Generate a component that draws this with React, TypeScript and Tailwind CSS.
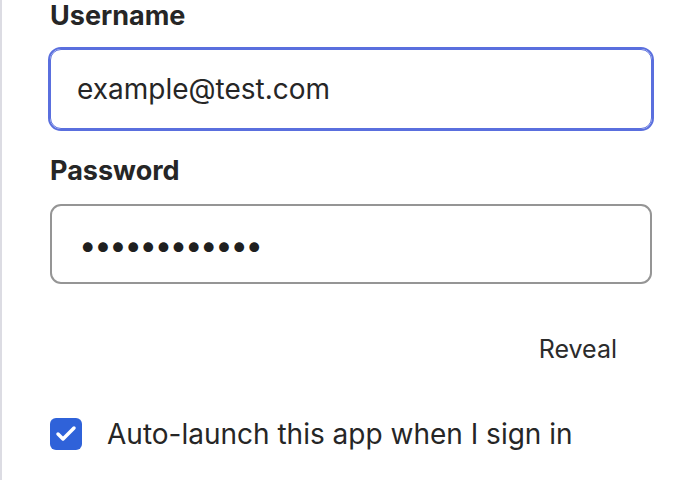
import { Check } from 'lucide-react';

// ? Sign-in form fragment: username, password, reveal, auto-launch
const App = () => {
  return (
    <div
      className="w-[700px] h-[480px] overflow-hidden bg-white border-l-2 border-[#dcdce3] text-[#262626]"
      style={{ fontFamily: 'Inter, "Noto Sans", sans-serif' }}
    >
      <div className="pl-[48px] pr-[48px] flex flex-col">
        <label className="block h-[32px] leading-[32px] text-[27px] font-bold">
          Username
        </label>
        <input
          readOnly
          value="example@test.com"
          className="mt-[17px] h-[80px] w-full rounded-[11px] border border-[#5a6fde] outline-2 outline-[#5a6fde] px-[26px] text-[28px] text-[#262626] bg-white"
        />

        <label className="block mt-[26px] h-[32px] leading-[32px] text-[27px] font-bold">
          Password
        </label>
        <div className="mt-[17px] h-[80px] w-full rounded-[11px] border-2 border-[#959595] px-[27px] flex items-center">
          <span className="text-[31px] tracking-[-2.3px] leading-none text-[#1f1f1f]">
            ••••••••••••
          </span>
        </div>

        <div className="mt-[49px] flex justify-end pr-[35px]">
          <button className="h-[32px] leading-[32px] text-[25px] text-[#2b2b2b]">
            Reveal
          </button>
        </div>

        <div className="mt-[53px] flex items-center gap-[25px]">
          <span className="w-[32px] h-[32px] rounded-[6px] bg-[#2f62d9] flex items-center justify-center">
            <Check className="size-[24px] text-white" strokeWidth={3.5} />
          </span>
          <span className="text-[28px] leading-[32px]">
            Auto-launch this app when I sign in
          </span>
        </div>
      </div>
    </div>
  );
};

export default App;
